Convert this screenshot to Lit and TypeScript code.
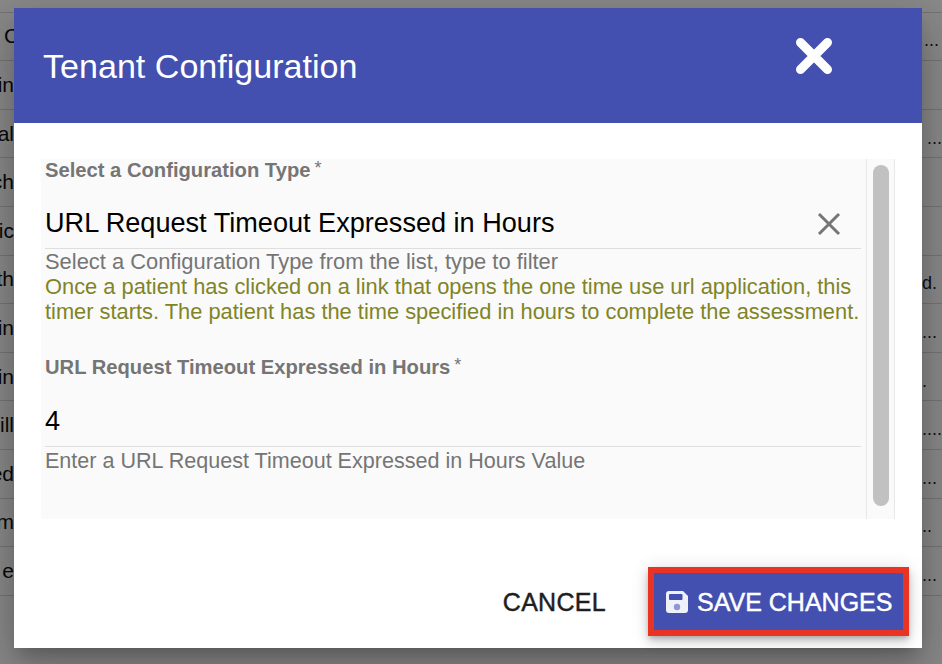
import { LitElement, html, css } from "lit";
import { customElement } from "lit/decorators.js";

const rows: [string, string, string?][] = [
  ["", ""],
  ["C", "...", "a"],
  ["in", ""],
  ["al", "...", "b"],
  ["ch", ""],
  ["ic", ""],
  ["th", "d."],
  ["in", "..."],
  ["in", "."],
  ["ill", "...."],
  ["ed", "..."],
  ["m", ".."],
  ["e", "..."],
];

@customElement("app-root")
export class AppRoot extends LitElement {
  static styles = css`
    :host {
      display: block;
      position: relative;
      width: 942px;
      height: 664px;
      overflow: hidden;
      background: #fff;
      font-family: "Liberation Sans", Arial, sans-serif;
    }
    .rows { display: flex; flex-direction: column; margin-top: -36px; }
    .row {
      height: 48.6px;
      box-sizing: border-box;
      border-bottom: 1px solid #d8d8d8;
      display: flex;
      align-items: center;
      justify-content: space-between;
      font-size: 21px;
      line-height: 24px;
      color: #111;
    }
    .l { width: 14px; overflow: hidden; white-space: nowrap; display: flex; justify-content: flex-end; }
    .l.first { justify-content: flex-start; padding-left: 4px; width: 10px; }
    .r { width: 20px; box-sizing: border-box; white-space: nowrap; font-size: 18px; color: #222; padding-top: 8px; }
    .r.a { padding-left: 2px; }
    .r.b { padding-left: 5px; }
    .scrim { position: absolute; inset: 0; background: rgba(0, 0, 0, 0.46); }
    .dialog {
      position: absolute;
      left: 14px;
      top: 8px;
      width: 908px;
      height: 640px;
      background: #fff;
      display: flex;
      flex-direction: column;
      box-shadow: 0 11px 15px -7px rgba(0,0,0,.2), 0 24px 38px 3px rgba(0,0,0,.14), 0 9px 46px 8px rgba(0,0,0,.12);
    }
    .head {
      height: 115px;
      flex: none;
      background: #4350af;
      color: #fff;
      display: flex;
      align-items: center;
      justify-content: space-between;
      padding: 0 90px 0 29px;
    }
    .title { font-size: 34.1px; line-height: 38px; }
    .close { width: 36px; height: 36px; margin-bottom: 19px; display: block; }
    .panel {
      margin: 36px 27px 0;
      height: 360px;
      flex: none;
      display: flex;
      background: #fafafa;
    }
    .form { width: 825px; box-sizing: border-box; padding: 0 5px 0 4px; flex: none; }
    .label { font-size: 20.2px; line-height: 22px; font-weight: 700; color: #757575; display: flex; }
    .label sup { font-size: 18px; font-weight: 400; line-height: 18px; margin-left: 4px; }
    .input {
      height: 68px;
      box-sizing: border-box;
      border-bottom: 1.5px solid #dedede;
      display: flex;
      justify-content: space-between;
      align-items: flex-end;
      font-size: 27.1px;
      line-height: 32px;
      color: #000;
      padding: 0 20px 9px 0;
    }
    .input.tall { height: 69px; }
    .clear { width: 24px; height: 24px; margin-bottom: 3px; display: block; }
    .help { font-size: 21.9px; line-height: 26px; color: #757575; margin-bottom: -1px; }
    .help.tight { font-size: 21.55px; margin-top: 1px; }
    .note { font-size: 21.85px; line-height: 25px; color: #808426; white-space: nowrap; }
    .second { margin-top: 32px; }
    .track {
      flex: 1;
      box-sizing: border-box;
      border-left: 1.5px solid #e8e8e8;
      border-right: 1.5px solid #e8e8e8;
      padding: 6px 5px 13px 6px;
    }
    .thumb { height: 100%; width: 16px; border-radius: 8px; background: #c1c1c1; }
    .foot {
      flex: 1;
      display: flex;
      justify-content: flex-end;
      align-items: flex-end;
      gap: 42px;
      padding: 0 13px 12px 0;
    }
    .btn { font-size: 25px; line-height: 30px; -webkit-text-stroke: 0.45px currentColor; }
    .cancel { color: #1e1e1e; align-self: flex-end; margin-bottom: 19px; letter-spacing: 0.3px; }
    .save {
      box-sizing: border-box;
      width: 261px;
      height: 69px;
      border: 6px solid #e93323;
      background: #4350af;
      color: #fff;
      display: flex;
      align-items: center;
      padding-left: 12px;
      gap: 9px;
      box-shadow: 0 3px 5px -1px rgba(0,0,0,.2), 0 6px 10px 0 rgba(0,0,0,.14), 0 1px 18px 0 rgba(0,0,0,.12);
    }
    .save svg { width: 22px; height: 22px; display: block; flex: none; }
  `;

  render() {
    return html`
      <div class="rows">
        ${rows.map(([l, r, k]) => html`<div class="row"><span class="l ${l === "C" ? "first" : ""}">${l}</span><span class="r ${k ?? ""}">${r}</span></div>`)}
      </div>
      <div class="scrim"></div>
      <div class="dialog">
        <div class="head">
          <span class="title">Tenant Configuration</span>
          <svg class="close" viewBox="0 0 36 36">
            <path d="M4.5 4.5 31.5 31.5M31.5 4.5 4.5 31.5" stroke="#fff" stroke-width="9" stroke-linecap="round" fill="none" />
          </svg>
        </div>
        <div class="panel">
          <div class="form">
            <div class="label">Select a Configuration Type<sup>*</sup></div>
            <div class="input">
              <span>URL Request Timeout Expressed in Hours</span>
              <svg class="clear" viewBox="0 0 24 24">
                <path d="M2 2 22 22M22 2 2 22" stroke="#757575" stroke-width="3" fill="none" />
              </svg>
            </div>
            <div class="help">Select a Configuration Type from the list, type to filter</div>
            <div class="note">Once a patient has clicked on a link that opens the one time use url application, this<br />timer starts. The patient has the time specified in hours to complete the assessment.</div>
            <div class="label second">URL Request Timeout Expressed in Hours<sup>*</sup></div>
            <div class="input tall"><span>4</span></div>
            <div class="help tight">Enter a URL Request Timeout Expressed in Hours Value</div>
          </div>
          <div class="track"><div class="thumb"></div></div>
        </div>
        <div class="foot">
          <span class="btn cancel">CANCEL</span>
          <div class="btn save">
            <svg viewBox="0 0 22 22">
              <path d="M3 0H17L22 5V19a3 3 0 0 1-3 3H3a3 3 0 0 1-3-3V3a3 3 0 0 1 3-3Z" fill="#eef0fa" />
              <rect x="3" y="3" width="13.5" height="6" rx="1" fill="#4350af" />
              <circle cx="11" cy="16" r="3.2" fill="#8f96d2" />
            </svg>
            <span>SAVE CHANGES</span>
          </div>
        </div>
      </div>
    `;
  }
}
